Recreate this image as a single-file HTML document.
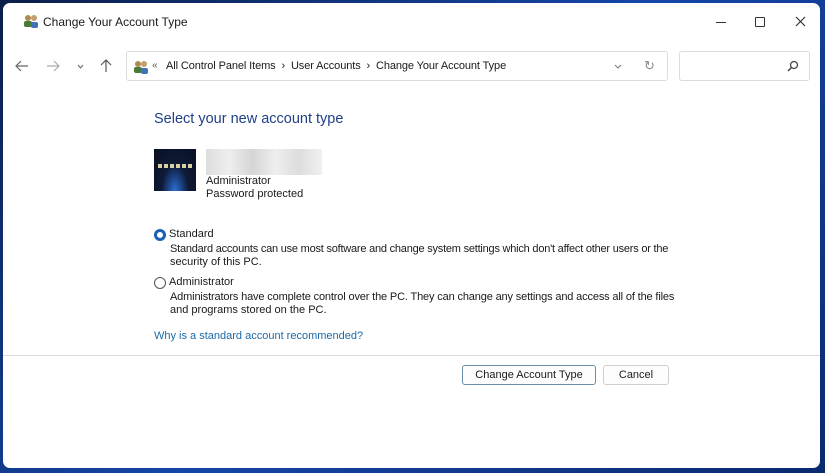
<!DOCTYPE html>
<html><head><meta charset="utf-8"><style>
*{margin:0;padding:0;box-sizing:border-box}
body{width:825px;height:473px;overflow:hidden;background:linear-gradient(135deg,#0b1e4a,#1546a8 50%,#0b2a6e);font-family:"Liberation Sans",sans-serif;font-size:11px;color:#1a1a1a;position:relative}
.win{position:absolute;left:3px;top:3px;width:817px;height:465px;background:#fff;border-radius:7px;overflow:hidden}
.a{position:absolute;white-space:nowrap}
.box{position:absolute;border:1px solid #dcdcdc;border-radius:3px;background:#fff}
.btn{position:absolute;border:1px solid #cfcfcf;border-radius:3px;background:#fdfdfd;text-align:center;line-height:18px;font-size:11px}
</style></head><body>
<div class="win">
<svg class="a" style="left:20px;top:10px" width="16" height="16"><circle cx="5" cy="5" r="3" fill="#b08a50"/><circle cx="11" cy="5" r="3" fill="#c0a070"/><rect x="1" y="8" width="8" height="6" rx="2" fill="#4a7a3a"/><rect x="8" y="9" width="7" height="6" rx="2" fill="#3f73b8"/></svg>
<div class="a" style="left:40px;top:12px;font-size:12px">Change Your Account Type</div>
<div class="a" style="left:713px;top:19px;width:10px;height:1px;background:#333"></div>
<div class="a" style="left:752px;top:14px;width:10px;height:10px;border:1px solid #333;border-radius:1px"></div>
<svg class="a" style="left:792px;top:13px" width="11" height="11"><path d="M1 1L10 10M10 1L1 10" stroke="#333" stroke-width="1.2"/></svg>
<svg class="a" style="left:12px;top:57px" width="14" height="12"><path d="M13 6H2M6 1L1 6L6 11" stroke="#666" stroke-width="1.2" fill="none"/></svg>
<svg class="a" style="left:43px;top:57px" width="14" height="12"><path d="M1 6H12M8 1L13 6L8 11" stroke="#aaa" stroke-width="1.2" fill="none"/></svg>
<svg class="a" style="left:74px;top:61px" width="7" height="5"><path d="M1 1L3.5 4L6 1" stroke="#666" fill="none"/></svg>
<svg class="a" style="left:97px;top:56px" width="12" height="14"><path d="M6 13V2M1 6L6 1L11 6" stroke="#555" stroke-width="1.2" fill="none"/></svg>
<div class="box" style="left:123px;top:48px;width:542px;height:30px"></div>
<svg class="a" style="left:130px;top:56px" width="16" height="16"><circle cx="5" cy="5" r="3" fill="#b08a50"/><circle cx="11" cy="5" r="3" fill="#c0a070"/><rect x="1" y="8" width="8" height="6" rx="2" fill="#4a7a3a"/><rect x="8" y="9" width="7" height="6" rx="2" fill="#3f73b8"/></svg>
<div class="a" style="left:149px;top:57px;font-size:10px;color:#555">«</div>
<div class="a" style="left:163px;top:57px;font-size:11px;letter-spacing:-0.1px">All Control Panel Items&nbsp;&nbsp;›&nbsp;&nbsp;User Accounts&nbsp;&nbsp;›&nbsp;&nbsp;Change Your Account Type</div>
<svg class="a" style="left:611px;top:61px" width="8" height="5"><path d="M1 1L4 4L7 1" stroke="#777" fill="none"/></svg>
<div class="a" style="left:641px;top:55px;font-size:13px;color:#888">↻</div>
<div class="box" style="left:676px;top:48px;width:131px;height:30px"></div>
<svg class="a" style="left:784px;top:57px" width="12" height="12"><circle cx="7" cy="5" r="3.5" stroke="#444" stroke-width="1.3" fill="none"/><path d="M4.5 7.5L1 11" stroke="#444" stroke-width="1.5"/></svg>
<div class="a" style="left:151px;top:108px;font-size:14.5px;color:#1e3f8a">Select your new account type</div>
<div class="a" style="left:151px;top:146px;width:42px;height:42px;background:radial-gradient(ellipse at 50% 100%,#2d6fd8 0,#0e1a36 45%,#0a0f22 100%)"><div style="position:absolute;left:4px;top:15px;width:34px;height:4px;background:repeating-linear-gradient(90deg,#d8d0a0 0 4px,transparent 4px 6px)"></div></div>
<div class="a" style="left:203px;top:146px;width:116px;height:26px;background:linear-gradient(90deg,#ddd,#eee,#d5d5d5,#eee,#ddd,#f0f0f0)"></div>
<div class="a" style="left:203px;top:172px">Administrator</div>
<div class="a" style="left:203px;top:185px">Password protected</div>
<div class="a" style="left:151px;top:226px;width:12px;height:12px;border-radius:50%;border:3.5px solid #1a5fb4;background:#fff"></div>
<div class="a" style="left:166px;top:225px">Standard</div>
<div class="a" style="left:167px;top:240px;letter-spacing:-0.22px">Standard accounts can use most software and change system settings which don't affect other users or the</div>
<div class="a" style="left:167px;top:253px">security of this PC.</div>
<div class="a" style="left:151px;top:274px;width:12px;height:12px;border-radius:50%;border:1px solid #555;background:#fff"></div>
<div class="a" style="left:166px;top:273px">Administrator</div>
<div class="a" style="left:167px;top:288px;letter-spacing:-0.15px">Administrators have complete control over the PC. They can change any settings and access all of the files</div>
<div class="a" style="left:167px;top:301px">and programs stored on the PC.</div>
<div class="a" style="left:151px;top:327px;color:#1a6aa8">Why is a standard account recommended?</div>
<div class="a" style="left:0;top:352px;width:817px;height:1px;background:#e2d8d8"></div>
<div class="btn" style="left:459px;top:362px;width:134px;height:20px;border-color:#6a8ea8">Change Account Type</div>
<div class="btn" style="left:600px;top:362px;width:66px;height:20px">Cancel</div>
</div>
</body></html>
